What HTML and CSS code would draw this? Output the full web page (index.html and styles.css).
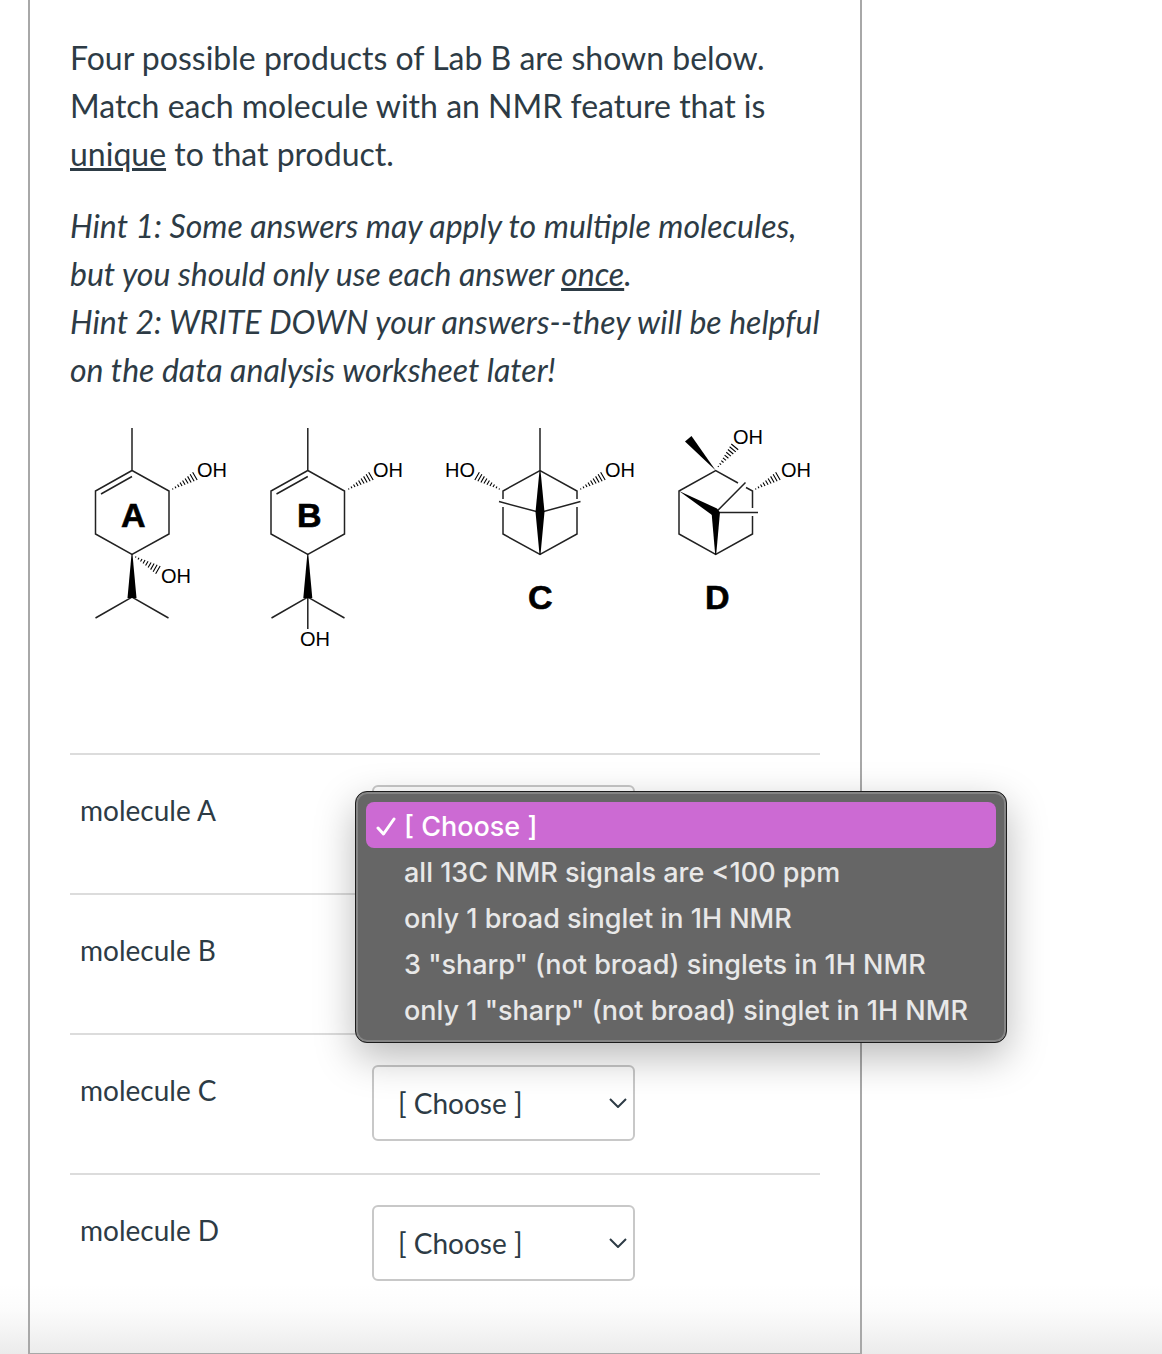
FILE: index.html
```html
<!DOCTYPE html>
<html lang="en">
<head>
<meta charset="utf-8">
<meta name="viewport" content="width=device-width, initial-scale=1">
<title>Lab B question</title>
<link rel="stylesheet" href="styles.css">
</head>
<body>
<main class="question">
  <p class="prompt">Four possible products of Lab B are shown below. Match each molecule with an NMR feature that is <u>unique</u> to that product.</p>
  <p class="prompt hints"><em>Hint 1: Some answers may apply to multiple molecules, but you should only use each answer <u>once</u>.<br>Hint 2: WRITE DOWN your answers--they will be helpful on the data analysis worksheet later!</em></p>

  <svg class="figure" viewBox="70 418 750 240" role="img" aria-label="Structures of molecules A, B, C and D">
    <defs>
      <!-- hashed bond pointing right, widening away from the ring -->
      <path id="hash" d="M2-.6V.6M5.200-1V1M8.400-1.500V1.500M11.600-2V2M14.800-2.500V2.500M18-3V3M21.200-3.500V3.500M24.400-4V4M27.600-4.500V4.500" stroke="#000" stroke-width="1.1"/>
    </defs>

    <!-- A -->
    <path class="bond" d="M132 428V470.500L169 491V534L132 554.500L95.500 534V491L132 470.500M101 494L132 476.500M95.500 618L132 597L168.500 618"/>
    <path class="wedge" d="M131.500 554.500H132.500L136.500 598H127.500Z"/>
    <use href="#hash" transform="translate(171 490) rotate(-30)"/>
    <use href="#hash" transform="translate(134 556) rotate(30)"/>
    <text class="atom" x="197" y="477">OH</text>
    <text class="atom" x="161" y="583">OH</text>
    <text class="name" x="121" y="527">A</text>

    <!-- B -->
    <path class="bond" d="M307.800 428V470.500L344.500 491V534L307.800 554.500L271 534V491L307.800 470.500M276.500 494L307.800 476.500M271.500 618L307.800 597L344.500 618M307.800 597V629"/>
    <path class="wedge" d="M307.300 554.500H308.300L312.300 598H303.300Z"/>
    <use href="#hash" transform="translate(347 490) rotate(-30)"/>
    <text class="atom" x="373" y="477">OH</text>
    <text class="atom" x="300" y="646">OH</text>
    <text class="name" x="297" y="527">B</text>

    <!-- C -->
    <path class="bond" d="M540 428V470.500M503 499V491L540 470.500L577 491V499M503 507V534L540 554.500L577 534V507M499 501.500L540 512.500L580.500 501.500"/>
    <path class="wedge" d="M539.500 470.500H540.500L544.500 512L540.500 554.500H539.500L535.500 512Z"/>
    <use href="#hash" transform="translate(501 490) rotate(-150)"/>
    <use href="#hash" transform="translate(579 490) rotate(-30)"/>
    <text class="atom" x="445" y="477">HO</text>
    <text class="atom" x="605" y="477">OH</text>
    <text class="name" x="528" y="609">C</text>

    <!-- D -->
    <path class="bond" d="M738 483L715.700 470.500L679 491V534L715.700 554.500L752.500 534V516M746 487.500L752.500 491V508M715.700 512.500L745.500 482.500M715.700 512.500H758"/>
    <path class="wedge" d="M715.700 470.500L685 441.500L691.500 436Z"/>
    <path class="wedge" d="M679 491L717 508.500L720 512.500L716 516L712 515Z"/>
    <path class="wedge" d="M715.200 554.500H716.200L720 512H711.500Z"/>
    <use href="#hash" transform="translate(717 468) rotate(-50)"/>
    <use href="#hash" transform="translate(754 490) rotate(-30)"/>
    <text class="atom" x="733" y="444">OH</text>
    <text class="atom" x="781" y="477">OH</text>
    <text class="name" x="705" y="609">D</text>
  </svg>

  <div class="answers">
    <div class="answer">
      <label class="label" for="a">molecule A</label>
      <div class="field">
        <select class="select" id="a"><option>[ Choose ]</option></select>
        <svg class="chevron" viewBox="0 0 18 10"><path d="M1 1L9 9L17 1"/></svg>
        <ul class="menu" role="listbox" aria-label="molecule A">
          <li class="option selected" role="option" aria-selected="true"><svg class="check" viewBox="0 0 20 20"><path d="M2 11L7.500 17L18 2"/></svg>[ Choose ]</li>
          <li class="option" role="option">all 13C NMR signals are &lt;100 ppm</li>
          <li class="option" role="option">only 1 broad singlet in 1H NMR</li>
          <li class="option" role="option">3 "sharp" (not broad) singlets in 1H NMR</li>
          <li class="option" role="option">only 1 "sharp" (not broad) singlet in 1H NMR</li>
        </ul>
      </div>
    </div>
    <div class="answer">
      <label class="label" for="b">molecule B</label>
      <div class="field">
        <select class="select" id="b"><option>[ Choose ]</option></select>
        <svg class="chevron" viewBox="0 0 18 10"><path d="M1 1L9 9L17 1"/></svg>
      </div>
    </div>
    <div class="answer">
      <label class="label" for="c">molecule C</label>
      <div class="field">
        <select class="select" id="c"><option>[ Choose ]</option></select>
        <svg class="chevron" viewBox="0 0 18 10"><path d="M1 1L9 9L17 1"/></svg>
      </div>
    </div>
    <div class="answer">
      <label class="label" for="d">molecule D</label>
      <div class="field">
        <select class="select" id="d"><option>[ Choose ]</option></select>
        <svg class="chevron" viewBox="0 0 18 10"><path d="M1 1L9 9L17 1"/></svg>
      </div>
    </div>
  </div>
</main>
</body>
</html>
```
FILE: styles.css
```css
* {
  box-sizing: border-box;
}

body {
  margin: 0;
  padding-left: 28px;
  background: linear-gradient(to top, #ebebeb, #f3f3f3 20px, #fcfcfc 46px, #fff 70px);
  color: #2d3b45;
  font-family: Lato, sans-serif;
}

.question {
  max-width: 834px;
  padding: 34px 40px 40px;
  border: 2px solid #a8a8a8;
  border-top: 0;
  border-bottom-width: 1px;
}

.prompt {
  margin: 0 0 24px;
  font-size: 32px;
  line-height: 48px;
}

.prompt u {
  text-decoration-thickness: 3px;
}

.figure {
  display: block;
  width: 100%;
  margin-bottom: 95px;
}

.bond {
  fill: none;
  stroke: #222;
  stroke-width: 1.5;
}

.wedge {
  fill: #000;
}

.atom {
  font: 20px "Liberation Sans", Arial, sans-serif;
}

.name {
  font: bold 34px "Liberation Sans", Arial, sans-serif;
  stroke: #000;
  stroke-width: 0.6;
}

.answer {
  display: grid;
  grid-template-columns: 292px 263px;
  padding: 30px 10px 32px;
  border-top: 2px solid #dcdcdc;
}

.label {
  font-size: 28px;
  line-height: 50px;
}

.field {
  display: grid;
  align-items: center;
  position: relative;
}

.select {
  grid-area: 1 / 1;
  width: 100%;
  height: 76px;
  padding: 0 40px 0 24px;
  border: 2px solid #c8c8c8;
  border-radius: 6px;
  background: transparent;
  color: inherit;
  font: 28px/42px Lato, sans-serif;
  appearance: none;
}

.chevron {
  grid-area: 1 / 1;
  justify-self: end;
  width: 18px;
  margin-right: 8px;
  fill: none;
  stroke: #2d3b45;
  stroke-width: 2;
  pointer-events: none;
}

.menu {
  position: absolute;
  top: 6px;
  left: -17px;
  z-index: 1;
  width: 652px;
  margin: 0;
  padding: 10px;
  border: 1px solid #1c1c1c;
  border-radius: 12px;
  background: #666;
  box-shadow: inset 0 0 0 2px #858585, 0 14px 40px rgba(0, 0, 0, 0.28);
  color: #e8e8e8;
  font: 500 27px/46px Inter, sans-serif;
  list-style: none;
}

.option {
  display: flex;
  align-items: center;
  height: 46px;
  padding: 4px 0 0 38px;
  white-space: nowrap;
}

.option.selected {
  gap: 8px;
  padding-left: 10px;
  border-radius: 8px;
  background: #cc6ad3;
  color: #fff;
}

.check {
  width: 20px;
  fill: none;
  stroke: currentColor;
  stroke-width: 3;
  stroke-linecap: round;
  stroke-linejoin: round;
}
```
